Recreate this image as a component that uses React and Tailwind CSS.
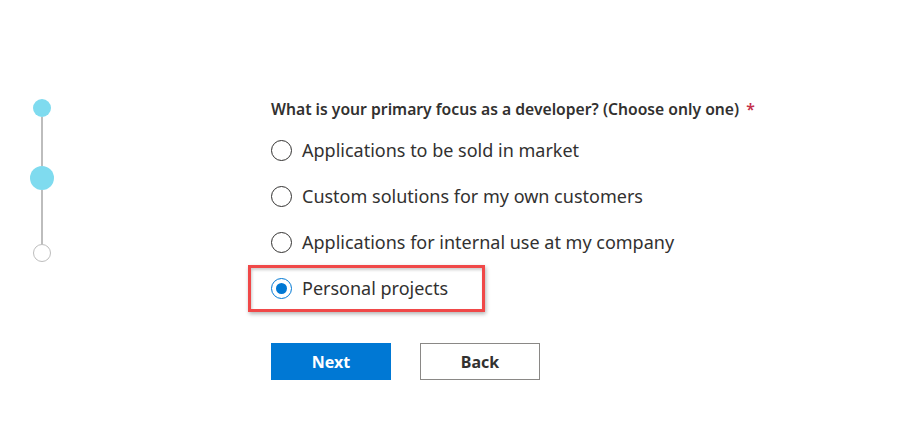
import { useState } from 'react'

const OPTIONS = [
  'Applications to be sold in market',
  'Custom solutions for my own customers',
  'Applications for internal use at my company',
  'Personal projects',
]

function Stepper() {
  return (
    <div className="flex w-[24px] flex-col items-center">
      <div className="h-[18px] w-[18px] rounded-full bg-[#7fdbef]" />
      <div className="h-[49px] w-[2px] bg-[#bdbdbd]" />
      <div className="h-[24px] w-[24px] rounded-full bg-[#7fdbef]" />
      <div className="h-[54px] w-[2px] bg-[#bdbdbd]" />
      <div className="h-[18px] w-[18px] rounded-full border border-[#bdbdbd] bg-white" />
    </div>
  )
}

function Radio({ checked }) {
  return (
    <span
      className={`flex h-[21px] w-[21px] shrink-0 items-center justify-center rounded-full border ${
        checked ? 'border-[#0078d4]' : 'border-[#323130]'
      }`}
    >
      {checked && <span className="h-[11px] w-[11px] rounded-full bg-[#0078d4]" />}
    </span>
  )
}

export default function App() {
  const [value, setValue] = useState(3)

  return (
    <div
      className="flex h-[422px] w-[914px] bg-white pl-[30px] pt-[99px] text-[#323130]"
      style={{ fontFamily: '"Noto Sans", "Open Sans", sans-serif' }}
    >
      <Stepper />

      <div className="ml-[217px] flex flex-col">
        <p className="h-[20px] whitespace-nowrap text-[15.7px] leading-[20px] font-semibold text-[#323130]">
          What is your primary focus as a developer? (Choose only one)
          <span className="ml-[7px] text-[#c4314b]">*</span>
        </p>

        <div className="mt-[8px] flex flex-col">
          {OPTIONS.map((opt, i) => (
            <label
              key={opt}
              onClick={() => setValue(i)}
              className="relative flex h-[46px] cursor-pointer items-center gap-[10px]"
            >
              <Radio checked={value === i} />
              <span className="text-[18px] leading-[24px]">{opt}</span>
              {i === 3 && (
                <span className="pointer-events-none absolute left-[-23px] top-0 h-[47px] w-[237px] border-[3px] border-[#f04848] shadow-[1px_2px_4px_rgba(0,0,0,0.3),inset_1px_2px_3px_rgba(0,0,0,0.2)]" />
              )}
            </label>
          ))}
        </div>

        <div className="mt-[32px] flex gap-[29px]">
          <button className="h-[37px] w-[120px] bg-[#0078d4] text-[16px] font-bold text-white">
            Next
          </button>
          <button className="h-[37px] w-[120px] border border-[#8a8886] bg-white text-[16px] font-bold text-[#323130]">
            Back
          </button>
        </div>
      </div>
    </div>
  )
}
